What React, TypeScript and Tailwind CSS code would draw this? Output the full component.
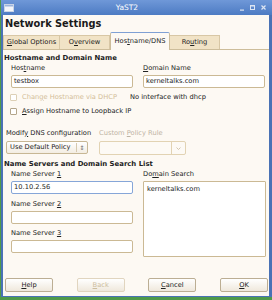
import React from 'react';

// mnemonic underline, as in the YaST dialog labels
function U({ children }: { children: string }) {
  return <span className="underline decoration-[0.6px] underline-offset-[1px]">{children}</span>;
}

function Label({ children, className = '' }: { children: React.ReactNode; className?: string }) {
  return (
    <div className={`flex h-[10px] items-center ${className}`}>
      <span>{children}</span>
    </div>
  );
}

function TextField({ value = '', focused = false }: { value?: string; focused?: boolean }) {
  return (
    <div
      className={`mt-[2px] flex h-[13px] w-[122px] items-center rounded-[2px] border bg-white pl-[2px] ${
        focused ? 'border-[#86a6d8]' : 'border-[#cbb994]'
      }`}
    >
      {value}
    </div>
  );
}

function CheckBox({ disabled = false }: { disabled?: boolean }) {
  return (
    <div
      className={`h-[7px] w-[7px] shrink-0 rounded-[1px] border bg-white ${
        disabled ? 'border-[#ddd0b6]' : 'border-[#b3a58a]'
      }`}
    />
  );
}

function Btn({ children, disabled = false }: { children: React.ReactNode; disabled?: boolean }) {
  return (
    <div
      className={`flex h-[14px] w-[48px] items-center justify-center rounded-[2px] border bg-gradient-to-b from-white to-[#efe8dc] ${
        disabled ? 'border-[#e1d5bf] text-[#cdbd9e]' : 'border-[#bcae93] text-[#222]'
      }`}
    >
      <span>{children}</span>
    </div>
  );
}

const TABS = [
  { key: 'global', label: <><U>G</U>lobal Options</>, w: 'w-[57px]' },
  { key: 'overview', label: <>O<U>v</U>erview</>, w: 'w-[50px]' },
  { key: 'dns', label: <>Hos<U>t</U>name/DNS</>, w: 'w-[60px]' },
  { key: 'routing', label: <>Ro<U>u</U>ting</>, w: 'w-[50px]' },
];

export default function App() {
  return (
    <div
      className="flex h-[300px] w-[272px] flex-col bg-[#4f9a4a] pb-[3px] pl-px text-[6.7px] leading-none text-[#222]"
      style={{ fontFamily: '"DejaVu Sans", Verdana, sans-serif' }}
    >
      {/* Title bar */}
      <div className="flex h-[15px] shrink-0 items-center bg-gradient-to-b from-[#6f98d8] to-[#4d7bc3] pl-[3px] pr-[6px]">
        <svg width="10" height="8" viewBox="0 0 10 8" className="shrink-0">
          <rect x="0.5" y="0.5" width="9" height="7" fill="#f4f6fa" stroke="#c9d4e6" />
          <rect x="1" y="1" width="8" height="1.5" fill="#9bb4dc" />
        </svg>
        <div className="flex-1 text-center text-[7.5px] text-white">YaST2</div>
        <div className="flex items-center gap-[6px]">
          <svg width="4" height="6" viewBox="0 0 4 6">
            <rect x="0" y="4.5" width="4" height="1.2" fill="#dde5f2" />
          </svg>
          <svg width="5" height="5" viewBox="0 0 5 5">
            <rect x="0.5" y="0.5" width="4" height="4" fill="none" stroke="#dde5f2" />
            <rect x="0.5" y="0.5" width="4" height="1" fill="#dde5f2" />
          </svg>
          <svg width="5" height="5" viewBox="0 0 5 5">
            <path d="M0.5 0.5L4.5 4.5M4.5 0.5L0.5 4.5" stroke="#dde5f2" strokeWidth="1.2" />
          </svg>
        </div>
      </div>

      {/* Window body */}
      <div className="flex flex-1 flex-col border-b border-l-2 border-r-[3px] border-[#4a72b5] bg-[#fdf9f3]">
        <div className="flex h-[17px] shrink-0 items-center pl-[2px] text-[9.8px] font-bold text-[#1a1a1a]">
          Network Settings
        </div>

        {/* Tabs */}
        <div className="flex h-[18px] shrink-0 items-end border-b border-[#cdbd9a]">
          {TABS.map((t) =>
            t.key === 'dns' ? (
              <div
                key={t.key}
                className={`${t.w} relative -mb-px flex h-[18px] items-center justify-center rounded-t-[2px] border-x border-t border-x-[#cdbd9a] border-t-[#7fa0d4] bg-[#fdf9f3]`}
              >
                <span>{t.label}</span>
              </div>
            ) : (
              <div
                key={t.key}
                className={`${t.w} flex h-[14px] items-center justify-center border-r border-t border-[#d8c7a5] bg-[#f1e3c6] ${
                  t.key === 'global' ? 'border-l' : ''
                }`}
              >
                <span>{t.label}</span>
              </div>
            )
          )}
        </div>

        {/* Hostname section */}
        <Label className="mt-[3px] pl-px text-[6.9px] font-bold">Hostname and Domain Name</Label>
        <div className="flex">
          <div className="w-[140px] pl-[8px]">
            <Label>
              Hos<U>t</U>name
            </Label>
            <TextField value="testbox" />
          </div>
          <div>
            <Label>
              <U>D</U>omain Name
            </Label>
            <TextField value="kerneltalks.com" />
          </div>
        </div>

        <div className="mt-[4px] flex h-[10px] items-center pl-[7px]">
          <CheckBox disabled />
          <span className="ml-[5px] w-[108px] shrink-0 text-[#d3bd98]">
            Chan<U>g</U>e Hostname via DHCP
          </span>
          <span className="shrink-0">No interface with dhcp</span>
        </div>
        <div className="mt-[4px] flex h-[10px] items-center pl-[7px]">
          <CheckBox />
          <span className="ml-[5px]">
            <U>A</U>ssign Hostname to Loopback IP
          </span>
        </div>

        {/* DNS policy */}
        <div className="mt-[12px] flex pl-[3px]">
          <div className="w-[93px]">
            <Label>
              Modif<U>y</U> DNS configuration
            </Label>
            <div className="mt-[3px] flex h-[13px] w-[82px] items-center rounded-[2px] border border-[#c7b794] bg-gradient-to-b from-white to-[#f3ede2]">
              <span className="flex-1 pl-[3px]">Use Default Policy</span>
              <span className="flex h-[9px] w-[11px] items-center justify-center border-l border-[#d6c9ae] text-[6px] text-[#666]">
                ⇕
              </span>
            </div>
          </div>
          <div>
            <Label className="text-[#bdb3a3]">
              Custom <U>P</U>olicy Rule
            </Label>
            <div className="mt-[3px] flex h-[14px] w-[87px] items-center rounded-[2px] border border-[#e2d3b3] bg-[#fdfaf5]">
              <span className="flex-1" />
              <span className="flex h-full w-[14px] items-center justify-center border-l border-[#e2d3b3]">
                <svg width="5" height="3" viewBox="0 0 5 3">
                  <path d="M0.5 0.5L2.5 2.5L4.5 0.5" fill="none" stroke="#c6b89c" strokeWidth="0.8" />
                </svg>
              </span>
            </div>
          </div>
        </div>

        {/* Name servers */}
        <Label className="mt-[4px] pl-px text-[6.9px] font-bold">Name Servers and Domain Search List</Label>
        <div className="flex">
          <div className="w-[140px] pl-[8px]">
            <Label>
              Name Server <U>1</U>
            </Label>
            <TextField value="10.10.2.56" focused />
            <Label className="mt-[5px]">
              Name Server <U>2</U>
            </Label>
            <div className="mt-[1px]">
              <TextField />
            </div>
            <Label className="mt-[4px]">
              Name Server <U>3</U>
            </Label>
            <div className="mt-[1px]">
              <TextField />
            </div>
          </div>
          <div>
            <Label>
              Do<U>m</U>ain Search
            </Label>
            <div className="mt-[2px] h-[76px] w-[123px] rounded-[1px] border border-[#cbb994] bg-white pl-[3px] pt-[4px]">
              kerneltalks.com
            </div>
          </div>
        </div>

        {/* Buttons */}
        <div className="mt-auto mb-[4px] flex items-center justify-between pl-[2px] pr-px">
          <Btn>
            <U>H</U>elp
          </Btn>
          <Btn disabled>
            <U>B</U>ack
          </Btn>
          <Btn>
            <U>C</U>ancel
          </Btn>
          <Btn>
            <U>O</U>K
          </Btn>
        </div>
      </div>
    </div>
  );
}
